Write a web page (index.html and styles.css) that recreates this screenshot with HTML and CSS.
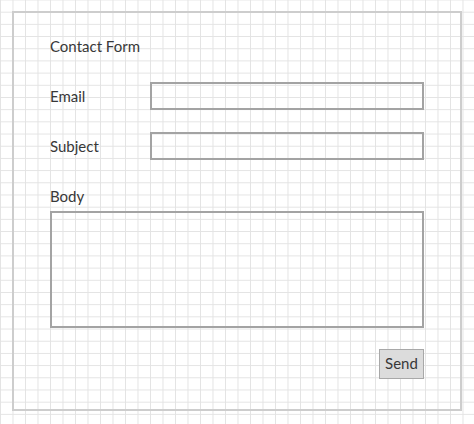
FILE: index.html
```html
<!DOCTYPE html>
<html>
<head>
<meta charset="utf-8">
<link rel="stylesheet" href="styles.css">
</head>
<body>
<div class="frame">
  <div class="title">Contact Form</div>
  <div class="row row-email">
    <label class="label">Email</label>
    <div class="input"></div>
  </div>
  <div class="row row-subject">
    <label class="label">Subject</label>
    <div class="input"></div>
  </div>
  <div class="body-label">Body</div>
  <div class="textarea"></div>
  <div class="actions">
    <div class="button">Send</div>
  </div>
</div>
</body>
</html>
```
FILE: styles.css
```css
html, body {
  margin: 0;
  padding: 0;
  width: 474px;
  height: 424px;
  overflow: hidden;
}
body {
  background-color: #ffffff;
  background-image:
    linear-gradient(to right, #e3e3e3 1px, transparent 1px),
    linear-gradient(to bottom, #e3e3e3 1px, transparent 1px);
  background-size: 12.5px 12.2px;
  background-position: 0 -0.5px;
  font-family: Lato, "Open Sans", sans-serif;
  color: #383838;
  padding-top: 11px;
  box-sizing: border-box;
}
.frame {
  margin-left: 12px;
  width: 450px;
  height: 400px;
  box-sizing: border-box;
  border: 2px solid #cdcdcd;
  padding: 23px 36px 0 36px;
  display: flex;
  flex-direction: column;
}
.title {
  font-size: 15px;
  line-height: 20px;
}
.row {
  display: flex;
  align-items: center;
}
.row-email {
  margin-top: 26px;
}
.row-subject {
  margin-top: 22px;
}
.label {
  width: 100px;
  font-size: 15px;
  line-height: 20px;
}
.input {
  width: 274px;
  height: 28px;
  box-sizing: border-box;
  border: 2px solid #a3a3a3;
}
.body-label {
  margin-top: 26px;
  font-size: 15px;
  line-height: 20px;
}
.textarea {
  margin-top: 5px;
  width: 374px;
  height: 117px;
  box-sizing: border-box;
  border: 2px solid #a3a3a3;
}
.actions {
  display: flex;
  justify-content: flex-end;
  margin-top: 21px;
  width: 374px;
}
.button {
  width: 45px;
  height: 30px;
  box-sizing: border-box;
  background: #dcdcdc;
  border: 1.5px solid #a8a8a8;
  font-size: 15px;
  line-height: 27px;
  text-align: center;
  color: #383838;
}
```
